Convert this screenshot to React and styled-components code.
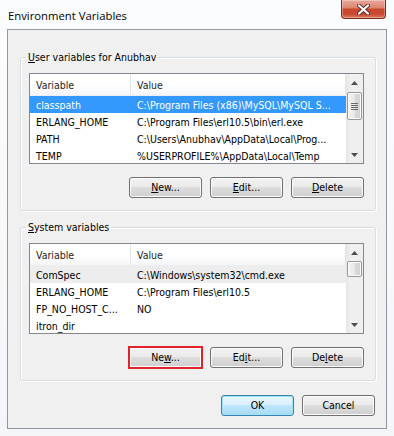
import styled, { createGlobalStyle } from 'styled-components';

const GlobalStyle = createGlobalStyle`
  html, body {
    margin: 0;
    padding: 0;
  }
  body {
    width: 394px;
    height: 436px;
    overflow: hidden;
    font-family: "DejaVu Sans Condensed", "DejaVu Sans", sans-serif;
    font-size: 10.5px;
    color: #000;
  }
`;

const Window = styled.div`
  width: 394px;
  height: 436px;
  box-sizing: border-box;
  display: flex;
  flex-direction: column;
  padding: 0 7px 7px 7px;
  background: linear-gradient(#fbfcfd, #f3f5f8);
`;

const TitleBar = styled.div`
  height: 29px;
  flex: none;
  display: flex;
  align-items: flex-start;
  justify-content: space-between;
`;

const Title = styled.div`
  font-family: "Open Sans", "Noto Sans", sans-serif;
  font-size: 11.3px;
  line-height: 15px;
  margin: 8px 0 0 1px;
  color: #000;
`;

const CloseButton = styled.div`
  width: 45px;
  height: 19px;
  margin-right: 1px;
  box-sizing: border-box;
  border: 1px solid #7b2a1e;
  border-top: none;
  border-radius: 0 0 4px 4px;
  background: linear-gradient(#eaa99b 0%, #de8672 42%, #c9472f 52%, #c64a31 78%, #de7a5e 100%);
  box-shadow: inset 0 0 0 1px rgba(255, 255, 255, 0.3);
  display: flex;
  align-items: center;
  justify-content: center;
`;

const Client = styled.div`
  flex: 1;
  border: 1px solid #8e99a5;
  background: #f0f0f0;
  padding: 21px 10px 0 12px;
  display: flex;
  flex-direction: column;
`;

const Group = styled.fieldset`
  margin: 0;
  padding: 9px 11px 12px 8px;
  border: 1px solid #d5dfe5;
  border-radius: 3px;
  box-shadow: inset 1px 1px 0 #fff, 1px 1px 0 #fff;
  min-width: 0;
  & + & {
    margin-top: 10px;
  }
`;

const Legend = styled.legend`
  padding: 0 2px;
  margin-left: -3px;
  line-height: 13px;
  color: #000;
`;

const List = styled.div`
  width: 335px;
  height: 91px;
  box-sizing: border-box;
  border: 1px solid #828790;
  background: #fff;
  display: flex;
  overflow: hidden;
`;

const ListBody = styled.div`
  flex: 1;
  min-width: 0;
  display: flex;
  flex-direction: column;
`;

const HeaderRow = styled.div`
  flex: none;
  height: 22px;
  box-sizing: border-box;
  display: flex;
  background: linear-gradient(#ffffff 0%, #ffffff 55%, #f4f5f7 100%);
  border-bottom: 1px solid #eceef1;
`;

const HeaderCell = styled.div`
  width: ${p => p.$w}px;
  flex: ${p => (p.$w ? 'none' : '1')};
  box-sizing: border-box;
  padding-left: 6px;
  display: flex;
  align-items: center;
  border-right: 1px solid #e3e5e8;
  color: #1e1e1e;
`;

const Row = styled.div`
  flex: none;
  height: 17px;
  display: flex;
  align-items: center;
  background: ${p => (p.$active ? '#3399ff' : p.$inactive ? '#ededed' : 'transparent')};
  color: ${p => (p.$active ? '#fff' : '#000')};
`;

const Cell = styled.div`
  width: ${p => p.$w}px;
  flex: ${p => (p.$w ? 'none' : '1')};
  box-sizing: border-box;
  padding-left: 6px;
  line-height: 16px;
  white-space: nowrap;
  overflow: hidden;
`;

const ScrollBar = styled.div`
  width: 17px;
  flex: none;
  display: flex;
  flex-direction: column;
  background: linear-gradient(to right, #e6e6e6, #f0f0f0 30%, #eeeeee);
`;

const ArrowButton = styled.div`
  height: 17px;
  flex: none;
  display: flex;
  align-items: center;
  justify-content: center;
`;

const Track = styled.div`
  flex: 1;
  display: flex;
  flex-direction: column;
  padding-top: ${p => p.$offset}px;
`;

const Thumb = styled.div`
  height: ${p => p.$size}px;
  margin: 0 1px;
  box-sizing: border-box;
  border: 1px solid #979797;
  border-radius: 2px;
  background: linear-gradient(to right, #f5f5f5, #e8e8e8 50%, #d9d9d9 51%, #d3d3d3);
  box-shadow: inset 0 0 0 1px #fbfbfb;
  display: flex;
  align-items: center;
  justify-content: center;
`;

const ButtonRow = styled.div`
  width: 335px;
  display: flex;
  justify-content: flex-end;
  gap: 8px;
  margin-top: 13px;
`;

const Button = styled.button`
  width: 73px;
  height: 21px;
  box-sizing: border-box;
  padding: 0;
  border: 1px solid ${p => (p.$default ? '#3c7fb1' : '#707070')};
  border-radius: ${p => (p.$marked ? '0' : '3px')};
  background: ${p => (p.$default
    ? 'linear-gradient(#eaf6fd 0%, #d9f0fc 45%, #bee6fd 50%, #a7d9f5 100%)'
    : 'linear-gradient(#f2f2f2 0%, #ebebeb 45%, #dddddd 50%, #cfcfcf 100%)')};
  box-shadow: inset 0 0 0 1px ${p => (p.$default ? '#9de5fb' : '#fcfcfc')};
  outline: ${p => (p.$marked ? '2px solid #e0222b' : 'none')};
  outline-offset: -1px;
  font: inherit;
  color: #000;
  line-height: 19px;
`;

const Footer = styled.div`
  display: flex;
  justify-content: flex-end;
  gap: 8px;
  margin: 14px 1px 0 0;
`;

const Arrow = ({ down }) => (
  <svg width="7" height="4" viewBox="0 0 7 4">
    <polygon points={down ? '0,0 7,0 3.5,4' : '0,4 7,4 3.5,0'} fill="#4d4d4d" />
  </svg>
);

const Grip = () => (
  <svg width="7" height="7" viewBox="0 0 7 7">
    {[0, 2, 4, 6].map(y => (
      <rect key={y} x="0" y={y} width="7" height="1" fill="#6b6b6b" />
    ))}
  </svg>
);

const VariableList = ({ rows, thumbOffset, thumbSize, active, inactive }) => (
  <List>
    <ListBody>
      <HeaderRow>
        <HeaderCell $w={101}>Variable</HeaderCell>
        <HeaderCell>Value</HeaderCell>
      </HeaderRow>
      {rows.map(([name, value], i) => (
        <Row key={name} $active={i === active} $inactive={i === inactive}>
          <Cell $w={101}>{name}</Cell>
          <Cell>{value}</Cell>
        </Row>
      ))}
    </ListBody>
    <ScrollBar>
      <ArrowButton><Arrow /></ArrowButton>
      <Track $offset={thumbOffset}>
        <Thumb $size={thumbSize}>{thumbSize > 20 && <Grip />}</Thumb>
      </Track>
      <ArrowButton><Arrow down /></ArrowButton>
    </ScrollBar>
  </List>
);

const userRows = [
  ['classpath', 'C:\\Program Files (x86)\\MySQL\\MySQL S...'],
  ['ERLANG_HOME', 'C:\\Program Files\\erl10.5\\bin\\erl.exe'],
  ['PATH', 'C:\\Users\\Anubhav\\AppData\\Local\\Prog...'],
  ['TEMP', '%USERPROFILE%\\AppData\\Local\\Temp'],
];

const systemRows = [
  ['ComSpec', 'C:\\Windows\\system32\\cmd.exe'],
  ['ERLANG_HOME', 'C:\\Program Files\\erl10.5'],
  ['FP_NO_HOST_C...', 'NO'],
  ['itron_dir', ''],
];

const App = () => (
  <>
    <GlobalStyle />
    <Window>
      <TitleBar>
        <Title>Environment Variables</Title>
        <CloseButton>
          <svg width="13" height="11" viewBox="0 0 13 11">
            <path d="M2 1.5 L11 9.5 M11 1.5 L2 9.5" stroke="#5a2a22" strokeWidth="4" strokeLinecap="round" />
            <path d="M2 1.5 L11 9.5 M11 1.5 L2 9.5" stroke="#fff" strokeWidth="2.2" strokeLinecap="round" />
          </svg>
        </CloseButton>
      </TitleBar>
      <Client>
        <Group>
          <Legend><u>U</u>ser variables for Anubhav</Legend>
          <VariableList rows={userRows} active={0} thumbOffset={1} thumbSize={28} />
          <ButtonRow>
            <Button><u>N</u>ew...</Button>
            <Button><u>E</u>dit...</Button>
            <Button><u>D</u>elete</Button>
          </ButtonRow>
        </Group>
        <Group>
          <Legend><u>S</u>ystem variables</Legend>
          <VariableList rows={systemRows} inactive={0} thumbOffset={0} thumbSize={16} />
          <ButtonRow>
            <Button $marked>Ne<u>w</u>...</Button>
            <Button>Ed<u>i</u>t...</Button>
            <Button>De<u>l</u>ete</Button>
          </ButtonRow>
        </Group>
        <Footer>
          <Button $default>OK</Button>
          <Button>Cancel</Button>
        </Footer>
      </Client>
    </Window>
  </>
);

export default App;
